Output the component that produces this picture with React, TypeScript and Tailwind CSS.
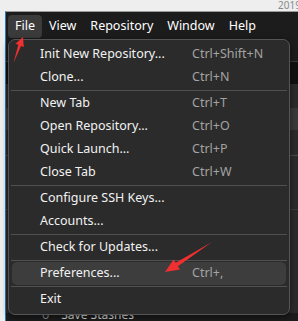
import React from "react"

type Item = { label: string; shortcut?: string; active?: boolean }

const groups: Item[][] = [
	[
		{ label: "Init New Repository...", shortcut: "Ctrl+Shift+N" },
		{ label: "Clone...", shortcut: "Ctrl+N" },
	],
	[
		{ label: "New Tab", shortcut: "Ctrl+T" },
		{ label: "Open Repository...", shortcut: "Ctrl+O" },
		{ label: "Quick Launch...", shortcut: "Ctrl+P" },
		{ label: "Close Tab", shortcut: "Ctrl+W" },
	],
	[{ label: "Configure SSH Keys..." }, { label: "Accounts..." }],
	[{ label: "Check for Updates..." }],
	[{ label: "Preferences...", shortcut: "Ctrl+,", active: true }],
	[{ label: "Exit" }],
]

const menus = ["File", "View", "Repository", "Window", "Help"]

function MenuRow({ item }: { item: Item }) {
	return (
		<div className={`mx-[3px] flex h-[23px] items-center whitespace-nowrap rounded-[5px] ${item.active ? "bg-[#3d3d3d]" : ""}`}>
			<span className="w-[180px] shrink-0 pl-[28px] text-[#f2f2f2]">{item.label}</span>
			<span className="text-[#a3a3a3]">{item.shortcut}</span>
		</div>
	)
}

export default function App() {
	return (
		<div className="relative h-[321px] w-[298px] overflow-hidden bg-[#eeeeee] font-['Noto_Sans',sans-serif] text-[12.5px] leading-none">
			<div className="flex h-[11px] justify-end">
				<span className="-mr-[3px] text-[10px] leading-[11px] text-[#8a8a8a]">2019</span>
			</div>
			<div className="ml-[5px] flex h-[310px] flex-col border-l border-t border-l-[#2a7ac4] border-t-[#9a9a9a] bg-[#1c1c1c]">
				<div className="flex h-[27px] items-center pl-[2px] pt-[1px]">
					{menus.map((m, i) => (
						<span key={m} className={`flex h-[23px] items-center rounded-[4px] px-[7px] text-white ${i === 0 ? "bg-[#3b3b3b]" : ""}`}>
							{m}
						</span>
					))}
				</div>
				<div className="flex flex-1 flex-col">
					<div className="h-[23px] border-b border-[#3a3a3a] bg-[#1c1c1c]" />
					<div className="h-[22px] bg-[#111111]" />
					<div className="h-[24px] bg-[#2b2b2b]" />
					<div className="h-[22px] bg-[#3a3a3a]" />
					<div className="h-[26px] border-b border-[#4a4a4a] bg-[#2b2b2b]" />
					<div className="h-[54px] border-b border-[#3a3a3a] bg-[#2b2b2b]" />
					<div className="flex-1 bg-[#2b2b2b]" />
					<div className="flex h-[8px] items-start gap-[12px] overflow-hidden pl-[36px] text-[12px] leading-[4px] text-[#d8d8d8]">
						<span className="text-[#8a8a8a]">o</span>
						<span>Save Stashes</span>
					</div>
				</div>
			</div>

			<div className="absolute left-[8px] top-[39px] w-[282px] rounded-[7px] border border-[#555555] bg-[#2b2b2b] py-[3px] shadow-[0_2px_6px_rgba(0,0,0,0.5)]">
				{groups.map((g, gi) => (
					<div key={gi}>
						{gi > 0 && (
							<div className="flex h-[3px] items-center px-[2px]">
								<div className="h-px w-full bg-[#505050]" />
							</div>
						)}
						{g.map((it) => (
							<MenuRow key={it.label} item={it} />
						))}
					</div>
				))}
			</div>

			<svg className="absolute left-0 top-0" width="298" height="321" viewBox="0 0 298 321">
				<polygon points="23,37 23.8,47 21,45.9 13.5,63 18.3,44.8 15.5,43.7" fill="#ee3030" />
				<polygon points="165,272 173.6,259.4 175.7,262.8 212,242 177.9,266.2 180,269.5" fill="#ee3030" />
			</svg>
		</div>
	)
}
